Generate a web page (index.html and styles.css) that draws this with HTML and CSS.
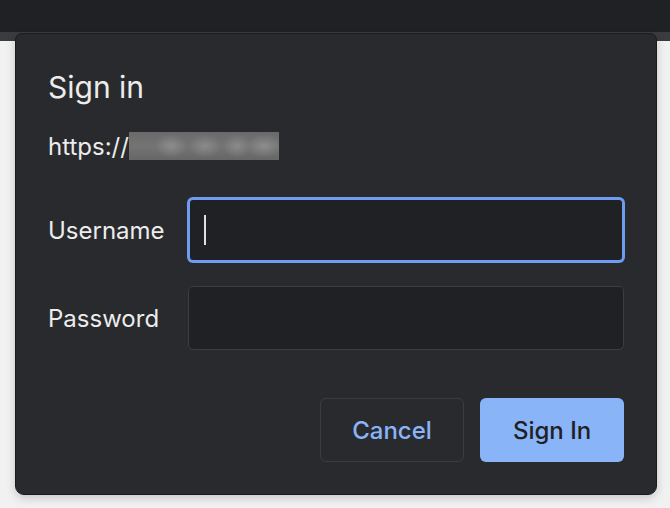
FILE: index.html
```html
<!DOCTYPE html>
<html lang="en">
<head>
<meta charset="utf-8">
<title>Sign in</title>
<link rel="stylesheet" href="styles.css">
</head>
<body>
<div class="dialog">
  <h1 class="title">Sign in</h1>
  <div class="origin">
    <span class="scheme">https://</span><span class="redacted" aria-label="hidden host"></span>
  </div>
  <div class="form">
    <label class="label">Username</label>
    <div class="field field-focused"><span class="caret"></span></div>
    <label class="label">Password</label>
    <div class="field"></div>
  </div>
  <div class="actions">
    <button class="btn btn-cancel">Cancel</button>
    <button class="btn btn-primary">Sign In</button>
  </div>
</div>
</body>
</html>
```
FILE: styles.css
```css
html, body {
  margin: 0;
  height: 100%;
}
body {
  width: 670px;
  height: 508px;
  overflow: hidden;
  box-sizing: border-box;
  padding: 33px 0 0 15px;
  background: linear-gradient(#202124 0 32px, #3b3c3f 32px 41px, #f1f1f1 41px);
  font-family: Inter, "Noto Sans", sans-serif;
  color: #ececec;
}
.dialog {
  width: 642px;
  height: 462px;
  box-sizing: border-box;
  padding: 35px 32px 0 32px;
  background: #292a2d;
  border: 1px solid #1b1b1d;
  border-radius: 7px 7px 9px 9px;
  box-shadow: 0 3px 10px rgba(0, 0, 0, 0.18);
}
.title {
  margin: 0;
  font-size: 30px;
  line-height: 36px;
  font-weight: 400;
  color: #ececec;
}
.origin {
  margin-top: 27px;
  display: flex;
  align-items: center;
  height: 28px;
  font-size: 24px;
}
.scheme {
  color: #ececec;
}
.redacted {
  display: inline-block;
  width: 150px;
  height: 28px;
  margin-left: 0;
  background:
    radial-gradient(ellipse 16px 12px at 42px 14px, rgba(160,160,160,.55), transparent),
    radial-gradient(ellipse 16px 12px at 76px 14px, rgba(160,160,160,.5), transparent),
    radial-gradient(ellipse 14px 12px at 108px 14px, rgba(160,160,160,.5), transparent),
    radial-gradient(ellipse 18px 12px at 135px 14px, rgba(160,160,160,.55), transparent),
    linear-gradient(#6a6a6a, #747474 50%, #666666);
}
.form {
  margin-top: 38px;
  display: grid;
  grid-template-columns: 140px 436px;
  row-gap: 24px;
  align-items: center;
}
.label {
  font-size: 24px;
  color: #ececec;
}
.field {
  height: 64px;
  box-sizing: border-box;
  background: #202124;
  border: 1px solid #3c3d41;
  border-radius: 5px;
  display: flex;
  align-items: center;
  padding-left: 15px;
}
.field-focused {
  border: 2px solid #6d9cf0;
  box-shadow: 0 0 0 1px #6d9cf0;
  border-radius: 5px;
  padding-left: 14px;
}
.caret {
  display: block;
  width: 2px;
  height: 30px;
  background: #e0e0e0;
}
.actions {
  margin-top: 48px;
  display: flex;
  justify-content: flex-end;
  gap: 16px;
}
.btn {
  width: 144px;
  height: 64px;
  box-sizing: border-box;
  border-radius: 6px;
  font-family: Inter, "Noto Sans", sans-serif;
  font-size: 24px;
  font-weight: 500;
  cursor: pointer;
}
.btn-cancel {
  background: transparent;
  border: 1px solid #3c3d41;
  color: #8ab4f8;
}
.btn-primary {
  background: #8ab4f8;
  border: none;
  color: #202124;
}
```
